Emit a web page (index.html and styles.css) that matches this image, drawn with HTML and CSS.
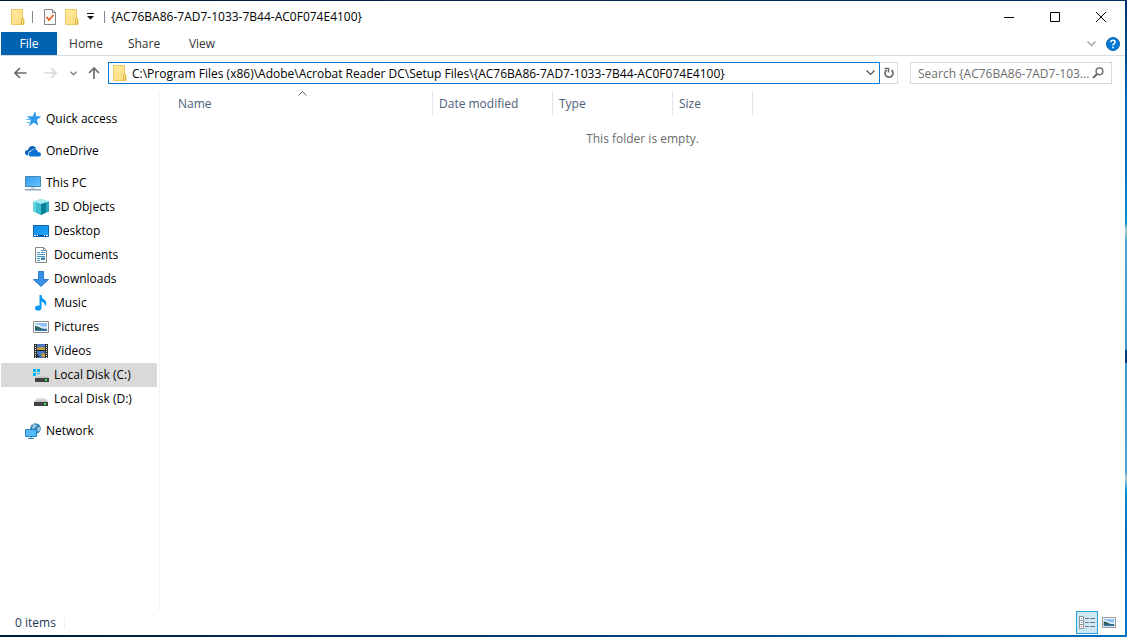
FILE: index.html
```html
<!DOCTYPE html>
<html lang="en">
<head>
  <meta charset="utf-8">
  <title>{AC76BA86-7AD7-1033-7B44-AC0F074E4100}</title>
  <link rel="stylesheet" href="styles.css">
</head>
<body>
  <!-- Shared icons -->
  <svg class="defs" width="0" height="0">
    <defs>
      <linearGradient id="paper" x1="0" y1="0" x2="1" y2="1"><stop offset="0" stop-color="#ffe9a2"/><stop offset="1" stop-color="#ffdb79"/></linearGradient>
      <linearGradient id="screen" x1="0" y1="0" x2="1" y2="1"><stop offset="0" stop-color="#2f9df4"/><stop offset="1" stop-color="#66c4fb"/></linearGradient>
      <linearGradient id="desk" x1="0" y1="0" x2="1" y2="1"><stop offset="0" stop-color="#0a8ae6"/><stop offset="1" stop-color="#28a8fb"/></linearGradient>
      <linearGradient id="disk" x1="0" y1="0" x2="0" y2="1"><stop offset="0" stop-color="#e6e6e6"/><stop offset="1" stop-color="#bdbdbd"/></linearGradient>
      <symbol id="folder" viewBox="0 0 14 16">
        <path d="M.5.5h11v9h1.500v6H.5z" fill="url(#paper)" stroke="#ecc95c"/>
        <path d="M10.500 15V10.500q0-1 1-1t1 1V15z" fill="#ffe89c" stroke="#dfb640"/>
      </symbol>
      <symbol id="picture" viewBox="0 0 16 12" preserveAspectRatio="none">
        <path d="M.5.5h15v11H.5z" fill="#fff" stroke="#8c8c8c"/>
        <path d="M2 2h12v8H2z" fill="#8fc1f2"/>
        <path d="M2 3.500q3-1 5 1t7 1v2H2z" fill="#e2effa"/>
        <path d="M2 5q3 0 5 1.500t7 1.500v1H2z" fill="#2d5f5c"/>
        <path d="M2 8.500h12V10H2z" fill="#3676b3"/>
      </symbol>
      <symbol id="drive" viewBox="0 0 14 8">
        <path d="M2.500 0h9L14 4H0z" fill="url(#disk)"/>
        <path d="M0 4h14v4H0z" fill="#3f4346"/>
        <path d="M10 5h2v2h-2z" fill="#2de353"/>
      </symbol>
    </defs>
  </svg>

  <div class="window">
    <header class="titlebar">
      <svg class="folder" width="14" height="16"><use href="#folder"/></svg>
      <span class="divider"></span>
      <button class="quick" aria-label="Properties">
        <svg width="12" height="16" viewBox="0 0 12 16"><path d="M.5.5h8l3 3v12H.5z" fill="#f9f9f9" stroke="#858585"/><path d="M8.500.5v3h3" fill="none" stroke="#858585"/><path d="M2.500 8l2.500 3 4.500-5" fill="none" stroke="#e65a24" stroke-width="1.700"/></svg>
      </button>
      <button class="quick" aria-label="New folder">
        <svg width="14" height="16"><use href="#folder"/></svg>
      </button>
      <button class="quick more" aria-label="Customize Quick Access Toolbar">
        <svg width="7" height="7" viewBox="0 0 7 7"><path d="M0 0h7v1H0zM0 3h7L3.500 6.500z" fill="#111"/></svg>
      </button>
      <span class="divider"></span>
      <h1>{AC76BA86-7AD7-1033-7B44-AC0F074E4100}</h1>
      <div class="controls">
        <button aria-label="Minimize"><svg width="10" height="10" viewBox="0 0 10 10"><path d="M0 5h10v1H0z"/></svg></button>
        <button aria-label="Maximize"><svg width="10" height="10" viewBox="0 0 10 10"><path d="M.5.5h9v9h-9z" fill="none" stroke="#000"/></svg></button>
        <button aria-label="Close"><svg width="10" height="10" viewBox="0 0 10 10"><path d="M0 0l10 10M10 0L0 10" stroke="#000"/></svg></button>
      </div>
    </header>

    <nav class="ribbon">
      <button class="tab file">File</button>
      <button class="tab">Home</button>
      <button class="tab">Share</button>
      <button class="tab">View</button>
      <button class="expand" aria-label="Expand the Ribbon"><svg width="9" height="6" viewBox="0 0 9 6"><path d="M.5.5l4 4 4-4" fill="none" stroke="#a0a0a0" stroke-width="1.300"/></svg></button>
      <button class="help" aria-label="Help"><svg width="14" height="14" viewBox="0 0 14 14"><circle cx="7" cy="7" r="6.500" fill="#0078d7" stroke="#1763a8"/><path d="M4.900 5.200q0-1.900 2.100-1.900t2.100 1.800q0 1-1.100 1.700T7 8.500" fill="none" stroke="#fff" stroke-width="1.500"/><path d="M6.200 9.700h1.600v1.500H6.200z" fill="#fff"/></svg></button>
    </nav>

    <div class="toolbar">
      <button class="arrow" aria-label="Back"><svg width="13" height="12" viewBox="0 0 13 12"><path d="M12.500 6H1M6 1L1 6l5 5" fill="none" stroke="#6b6b6b" stroke-width="1.700"/></svg></button>
      <button class="arrow" aria-label="Forward" disabled><svg width="13" height="12" viewBox="0 0 13 12"><path d="M.5 6H12M7 1l5 5-5 5" fill="none" stroke="#d8d8d8" stroke-width="1.700"/></svg></button>
      <button class="recent" aria-label="Recent locations"><svg width="7" height="5" viewBox="0 0 7 5"><path d="M.5.7l3 3 3-3" fill="none" stroke="#858585" stroke-width="1.600"/></svg></button>
      <button class="up" aria-label="Up"><svg width="12" height="12" viewBox="0 0 12 12"><path d="M6 12V1M1 6l5-5 5 5" fill="none" stroke="#6b6b6b" stroke-width="1.700"/></svg></button>
      <div class="address">
        <svg width="14" height="16"><use href="#folder"/></svg>
        <input type="text" aria-label="Address" value="C:\Program Files (x86)\Adobe\Acrobat Reader DC\Setup Files\{AC76BA86-7AD7-1033-7B44-AC0F074E4100}">
        <button aria-label="Previous locations"><svg width="9" height="6" viewBox="0 0 9 6"><path d="M.5.5l4 4 4-4" fill="none" stroke="#505050" stroke-width="1.200"/></svg></button>
      </div>
      <button class="refresh" aria-label="Refresh"><svg width="10" height="12" viewBox="0 0 10 12"><path d="M7.500 3A4 4 0 1 1 2.500 3" fill="none" stroke="#707070" stroke-width="1.800"/><path d="M.5 1.500h4v4" fill="none" stroke="#707070" stroke-width="1.600"/></svg></button>
      <div class="search">
        <input type="text" aria-label="Search" placeholder="Search {AC76BA86-7AD7-103...">
        <button aria-label="Search"><svg width="12" height="12" viewBox="0 0 12 12"><circle cx="7.500" cy="4.300" r="3.400" fill="none" stroke="#666" stroke-width="1.400"/><path d="M5 7L1 11" stroke="#666" stroke-width="1.900"/></svg></button>
      </div>
    </div>

    <div class="content">
      <nav class="sidebar">
        <ul>
          <li><a href="#"><svg width="16" height="16" viewBox="0 0 16 16"><path d="M10 1l.8 4.500 4.700.3-4 3 1.300 5.200-4-2.700L4.500 14.500l1.500-5L3.500 6l4.500-.3z" fill="#2b9cf0" stroke="#1c87d6" stroke-width=".6"/><path d="M2 5.500h5M1 8.500h5M2 11.500h4" stroke="#5bbcf6"/></svg>Quick access</a></li>
        </ul>
        <ul>
          <li><a href="#"><svg width="16" height="16" viewBox="0 0 16 16"><path d="M2.800 12.500Q0 12 0 9.500T3 7q1-4 4.500-4 3 0 4 2.500-4-.5-5.500 2-3 .5-3.200 5z" fill="#0860b8"/><path d="M5.500 13.500q-2-.5-2-2.500t2.300-2.500Q7 6 9.500 6t3.500 3q3 .2 3 2.500t-2.500 2z" fill="#0873d1"/></svg>OneDrive</a></li>
        </ul>
        <ul>
          <li><a href="#"><svg width="16" height="16" viewBox="0 0 16 16"><path d="M.5 1.500h15v10H.5z" fill="url(#screen)" stroke="#4786ae"/><path d="M6 12h4v2H6z" fill="#c5d4de"/><path d="M0 14h16v1.500H0z" fill="#8ea9ba"/></svg>This PC</a>
            <ul>
              <li><a href="#"><svg width="16" height="16" viewBox="0 0 16 16"><path d="M0 2.500L8 0l8 2.500v10L8 16l-8-3.500z" fill="#5fd3e0"/><path d="M0 2.500L8 0l8 2.500L8 5z" fill="#a5ebf1"/><path d="M3 3.500L8 5v11l-5-2.500z" fill="#3cbccd"/><path d="M8 5l5-1.500v10L8 16z" fill="#0b7f95"/><path d="M13 3.500l3-1v10l-3 1z" fill="#27a9bd"/></svg>3D Objects</a></li>
              <li><a href="#"><svg width="16" height="16" viewBox="0 0 16 16"><path d="M.5 2.500h15v11H.5z" fill="url(#desk)" stroke="#0866b3"/><path d="M1 12h14v1H1z" fill="#064f8b"/><path d="M1 12.500h2m1 0h1m6 0h1m1 0h2" stroke="#fff"/></svg>Desktop</a></li>
              <li><a href="#"><svg width="16" height="16" viewBox="0 0 16 16"><path d="M2.500.5h8l3 3v12h-11z" fill="#fff" stroke="#858585"/><path d="M10.500.5v3h3" fill="none" stroke="#858585"/><path d="M4 5.500h3M8 3.500h2M8 5.500h4M4 7.500h8M4 11.500h3M4 13.500h3M4 9.500h8" stroke="#4598c9"/><path d="M8 10.500h4V13H8z" fill="#357f9b"/></svg>Documents</a></li>
              <li><a href="#"><svg width="16" height="16" viewBox="0 0 16 16"><path d="M5.500.5h5v8h5L8 15.500.5 8.500h5z" fill="#3991e5" stroke="#2c7ac9"/></svg>Downloads</a></li>
              <li><a href="#"><svg width="16" height="16" viewBox="0 0 16 16"><ellipse cx="5.200" cy="13" rx="3.200" ry="2.600" fill="#0697f3"/><path d="M6.500 0h2q0 3 2.700 4.500Q15 7 12 11.500q.2-4-3.500-5V13h-2z" fill="#0697f3"/></svg>Music</a></li>
              <li><a href="#"><svg width="16" height="12"><use href="#picture"/></svg>Pictures</a></li>
              <li><a href="#"><svg width="16" height="16" viewBox="0 0 16 16"><path d="M1 1h14v14H1z" fill="#343434"/><path d="M4 1h8v14H4z" fill="#4877c4"/><path d="M4 5l2-1 1 1 2-2 1 2 2-1v3H4zM8 11l3-1 1 2v2H9z" fill="#c79d35"/><path d="M4 7h8v1H4zM4 11l3 3H4z" fill="#171f33"/><path d="M2.500 2v13M13.500 2v13" stroke="#ddd" stroke-dasharray="1 1"/></svg>Videos</a></li>
              <li class="selected"><a href="#"><svg width="16" height="16" viewBox="0 0 16 16"><path d="M0 2h3v3H0zM4 2h3v3H4zM0 6h3v3H0zM4 6h3v3H4z" fill="#00b3ee"/><use href="#drive" x="2" y="7" width="14" height="8"/></svg>Local Disk (C:)</a></li>
              <li><a href="#"><svg width="16" height="16" viewBox="0 0 16 16"><use href="#drive" x="1" y="7" width="14" height="8"/></svg>Local Disk (D:)</a></li>
            </ul>
          </li>
        </ul>
        <ul>
          <li><a href="#"><svg width="16" height="16" viewBox="0 0 16 16"><circle cx="10.500" cy="5.500" r="5.300" fill="#3584b3"/><path d="M8 1l4 1-2 3-3 1zM12 5l3-1v3l-2 2z" fill="#a0cbe3"/><path d="M.5 6.500h11v7H.5z" fill="#55baf8" stroke="#2780bb"/><path d="M3 15.500h6M6 14v1" stroke="#2780bb"/></svg>Network</a></li>
        </ul>
      </nav>

      <main>
        <table>
          <thead>
            <tr>
              <th class="name">Name<svg class="sort" width="9" height="5" viewBox="0 0 9 5"><path d="M.5 4.500l4-4 4 4" fill="none" stroke="#666"/></svg></th>
              <th class="date">Date modified</th>
              <th class="type">Type</th>
              <th class="size">Size</th>
            </tr>
          </thead>
        </table>
        <p class="empty">This folder is empty.</p>
      </main>
    </div>

    <footer>
      <span class="count">0 items</span>
      <button class="view active" aria-label="Details"><svg width="16" height="13" viewBox="0 0 16 13"><path d="M.5.5h4v12h-4zM.5 4.500h4M.5 8.500h4" fill="#fff" stroke="#8e9699"/><path d="M6 2.500h4m1 0h5M6 6.500h4m1 0h5M6 10.500h4m1 0h5" stroke="#777"/><path d="M2 2h1v1H2zM2 6h1v1H2z" fill="#2383c2"/><path d="M2 10h1v1H2z" fill="#d93025"/></svg></button>
      <button class="view" aria-label="Large icons"><svg width="14" height="11"><use href="#picture"/></svg></button>
    </footer>
  </div>
</body>
</html>
```
FILE: styles.css
```css
* {
  box-sizing: border-box;
}

/* The desktop shows as a thin edge round the window */
body {
  margin: 0;
  height: 100vh;
  padding: 1px 2px 2px 0;
  font-family: "Open Sans", "Noto Sans", sans-serif;
  font-size: 12px;
  line-height: 16px;
  color: #000;
  background:
    linear-gradient(#003066, #0067b8 16%, #0067b8 24%, #0095cf 35%, #b0c8c8 36%, #4aa5d5 38%, #3c97cd 55%, #003a7a 55%, #003a7a 57%, #3c97cd 57%, #4aa5d5 74%, #b0c8c8 75%, #0095cf 77%, #0067b8 84%, #0078ca) right / 2px 100% no-repeat,
    linear-gradient(90deg, #001b3a, #003066) top / 100% 1px no-repeat,
    linear-gradient(90deg, #001b3a, #003a70 50%, #0070c0) bottom / 100% 2px no-repeat;
}

svg {
  display: block;
  flex: none;
}

.defs {
  position: absolute;
}

button {
  display: flex;
  align-items: center;
  justify-content: center;
  padding: 0;
  border: 0;
  background: none;
  font: inherit;
}

input {
  flex: 1;
  min-width: 0;
  padding: 2px 0 0;
  border: 0;
  outline: 0;
  background: none;
  font: inherit;
}

.window {
  display: flex;
  flex-direction: column;
  height: 100%;
  padding-left: 1px;
  background: #fff;
}

/* Title bar */
.titlebar {
  display: flex;
  align-items: center;
  height: 31px;
  padding-left: 10px;
}

.divider {
  width: 1px;
  height: 12px;
  margin: 0 6px 0 7px;
  background: #888;
}

.quick {
  width: 22px;
}

.quick.more {
  width: 14px;
}

h1 {
  margin: 0;
  font-size: 12px;
  font-weight: normal;
}

.controls {
  display: flex;
  margin: 0 1px 0 auto;
}

.controls button {
  width: 46px;
  height: 30px;
}

/* Ribbon tabs */
.ribbon {
  display: flex;
  height: 24px;
  border-bottom: 1px solid #dadbdc;
}

.tab {
  width: 58px;
  color: #333;
}

.tab.file {
  width: 56px;
  color: #fff;
  background: #0063b1;
}

.expand {
  width: 20px;
  margin-left: auto;
}

.help {
  width: 24px;
}

/* Navigation and address */
.toolbar {
  display: flex;
  align-items: center;
  height: 34px;
  padding: 0 13px 0 12px;
}

.arrow {
  width: 14px;
  margin-right: 16px;
}

.recent {
  width: 8px;
  margin-left: -4px;
}

.up {
  width: 13px;
  margin: 0 8px 0 10px;
}

.address, .search, .refresh {
  height: 22px;
  border: 1px solid #d9d9d9;
}

.address {
  display: flex;
  flex: 1;
  align-items: center;
  gap: 5px;
  padding-left: 4px;
  border-color: #0078d7;
}

.address button {
  width: 17px;
  height: 20px;
}

.refresh {
  width: 18px;
  border-left: 0;
}

.search {
  display: flex;
  align-items: center;
  width: 202px;
  margin-left: 12px;
  padding: 0 7px;
}

.search input::placeholder {
  color: #6d6d6d;
  opacity: 1;
}

/* Folder tree */
.content {
  display: flex;
  flex: 1;
  min-height: 0;
}

.sidebar {
  width: 159px;
  margin-top: 1px;
  padding-top: 16px;
  border-right: 1px solid #f3f3f3;
}

.sidebar ul {
  margin: 0;
  padding: 0;
  list-style: none;
}

.sidebar > ul {
  margin-bottom: 8px;
}

.sidebar a {
  display: flex;
  align-items: center;
  gap: 5px;
  height: 24px;
  padding-left: 24px;
  color: #000;
  text-decoration: none;
}

.sidebar ul ul a {
  padding-left: 32px;
}

.selected {
  margin-right: 2px;
  background: #d9d9d9;
}

/* File list */
main {
  flex: 1;
  min-width: 0;
}

table {
  margin-top: 1px;
  border-collapse: separate;
  border-spacing: 0;
  table-layout: fixed;
  width: 593px;
}

th {
  position: relative;
  height: 25px;
  padding: 0 0 0 6px;
  border-right: 1px solid #e5e5e5;
  color: #4c607a;
  font-weight: normal;
  text-align: left;
}

.name {
  width: 273px;
  padding-left: 18px;
}

.date, .type {
  width: 120px;
}

.size {
  width: 80px;
}

.sort {
  position: absolute;
  top: 0;
  left: 138px;
}

.empty {
  margin: 15px 0 0;
  color: #6d6d6d;
  text-align: center;
}

/* Status bar */
footer {
  display: flex;
  align-items: flex-start;
  height: 24px;
  padding: 0 5px 0 14px;
}

.count {
  margin: 6px auto 0 0;
  padding-right: 8px;
  border-right: 1px solid #f0f0f0;
  color: #1e395b;
  line-height: 12px;
}

.view {
  width: 22px;
  height: 23px;
}

.view.active {
  border: 1px solid #26a0da;
  background: #cce8f6;
}
```
